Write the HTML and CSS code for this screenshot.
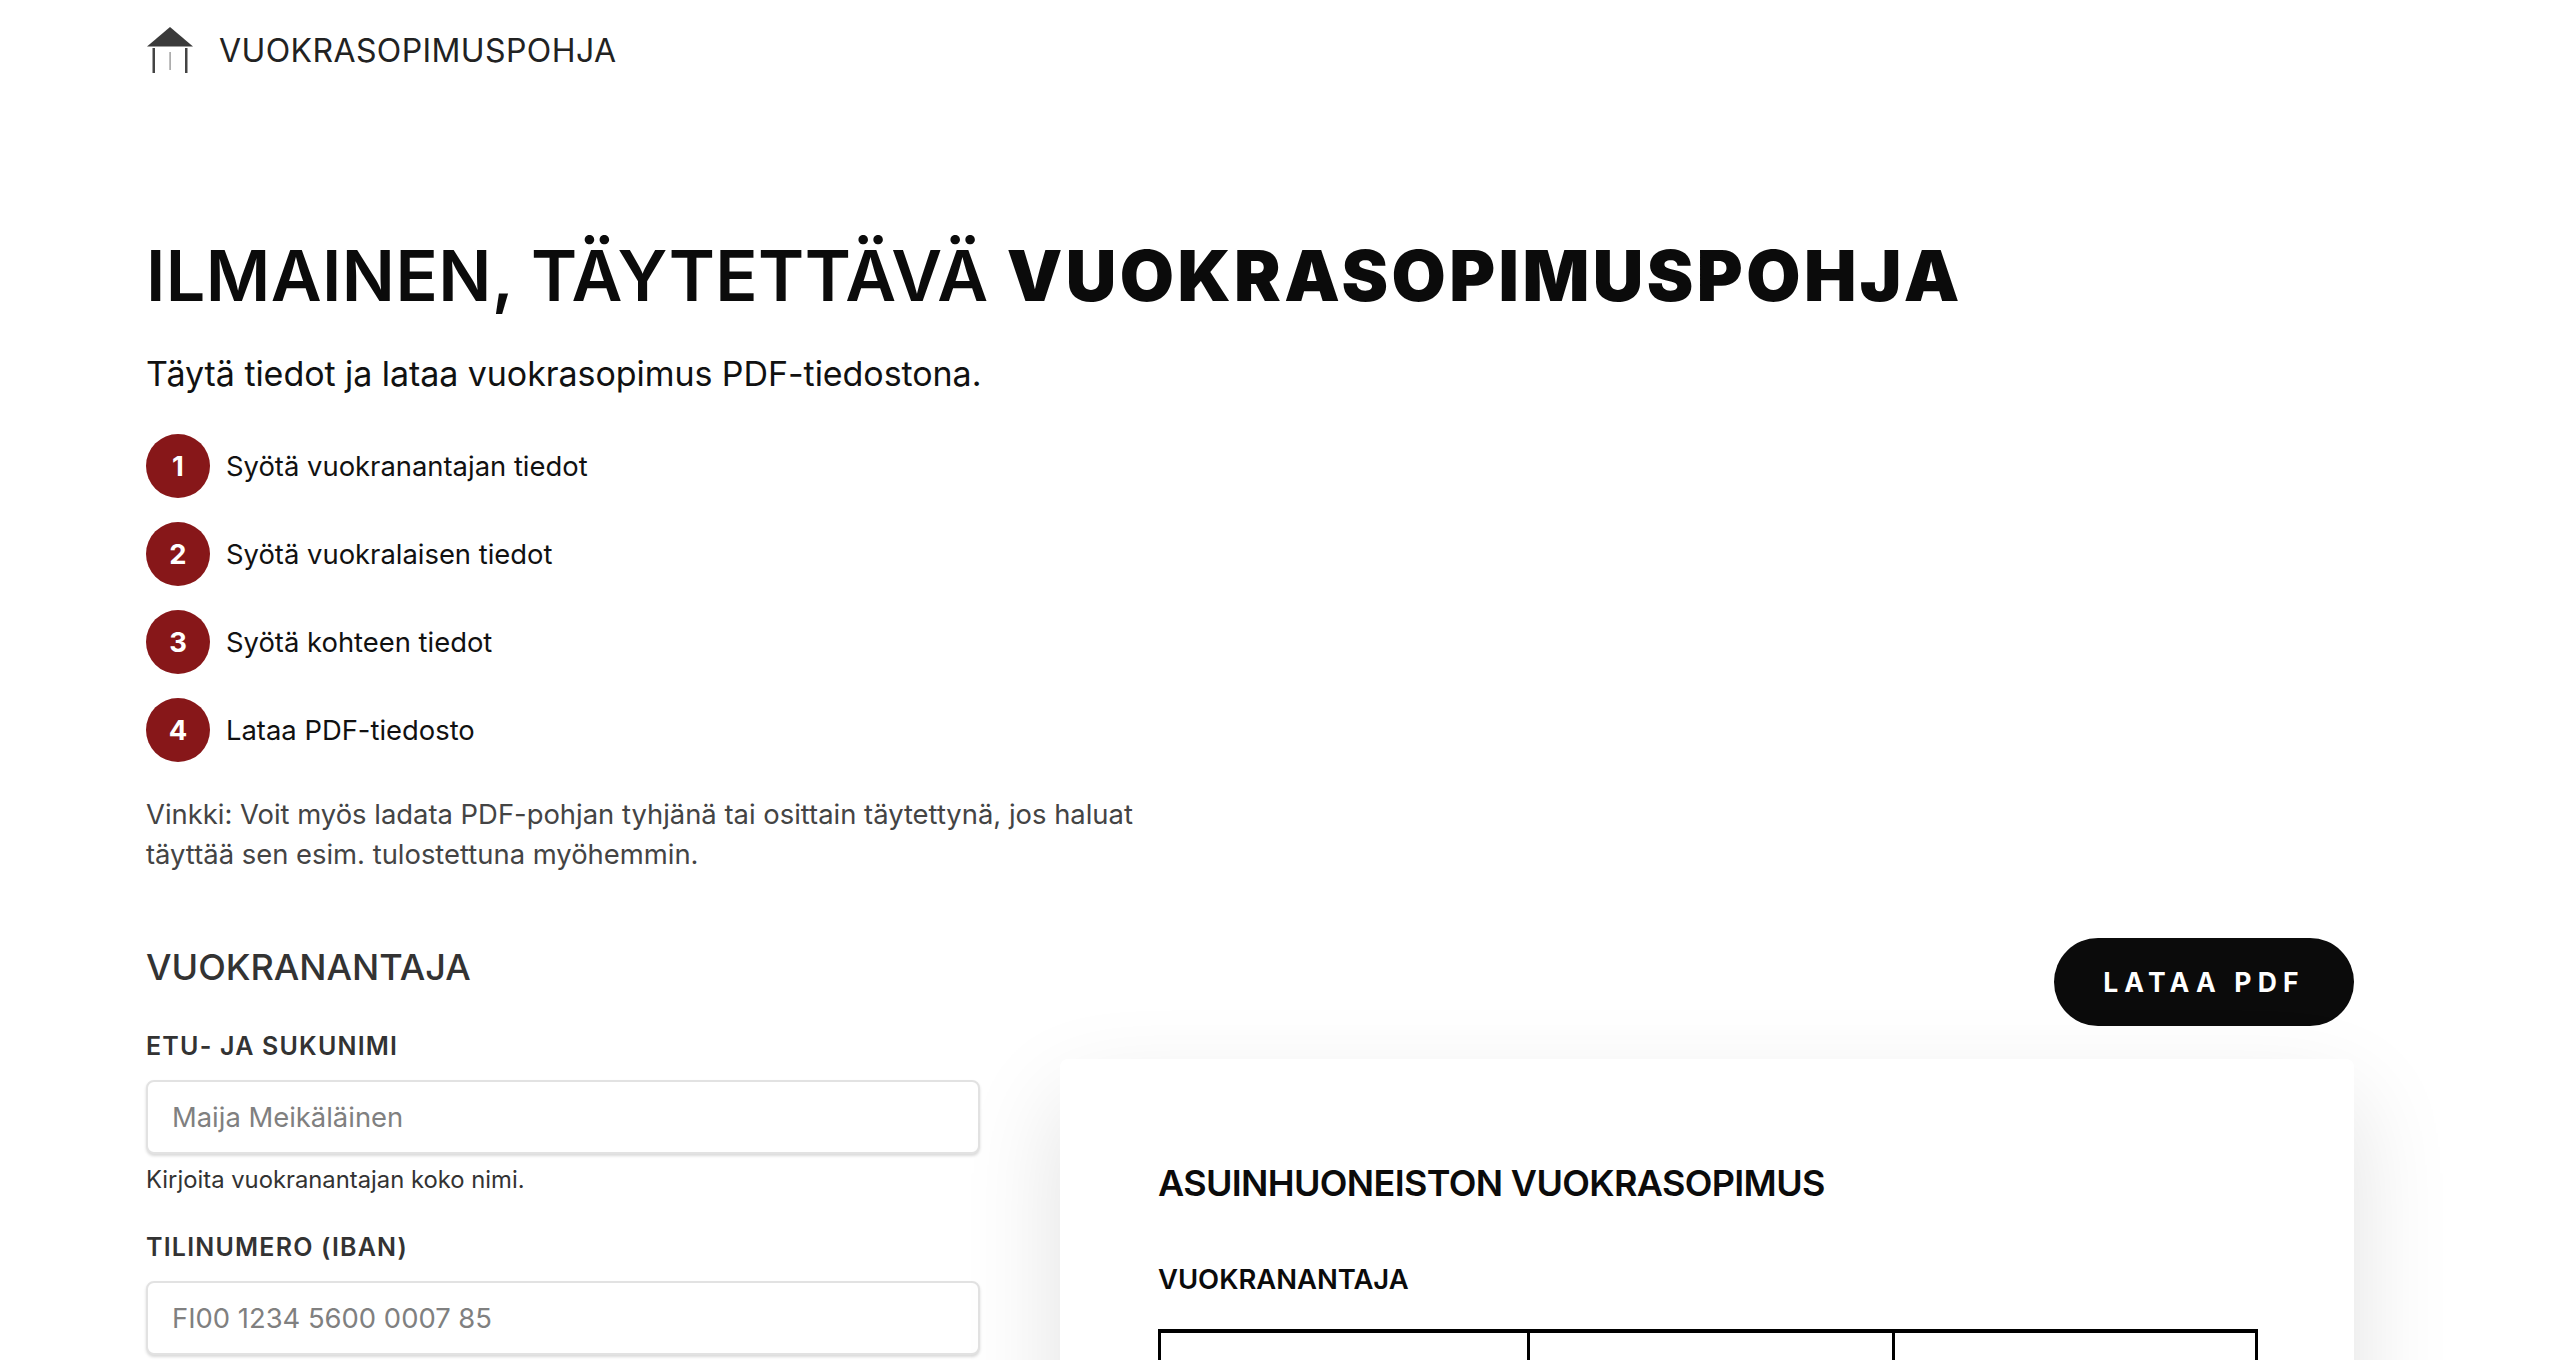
FILE: index.html
```html
<!DOCTYPE html>
<html lang="fi">
<head>
<meta charset="utf-8">
<title>Vuokrasopimuspohja</title>
<link rel="stylesheet" href="styles.css">
</head>
<body>
<div class="page">
  <header class="brand">
    <svg class="brand-icon" viewBox="0 0 46 46" aria-hidden="true">
      <polygon points="23,0 46,19.5 0,19.5" fill="#3a3a3a"/>
      <rect x="5.5" y="21" width="2.5" height="25" fill="#444"/>
      <rect x="22.4" y="25" width="1.4" height="18" fill="#999"/>
      <rect x="38" y="21" width="2.5" height="25" fill="#444"/>
    </svg>
    <span class="brand-name">VUOKRASOPIMUSPOHJA</span>
  </header>
  <section class="intro">
    <h1 class="title">ILMAINEN, TÄYTETTÄVÄ <strong>VUOKRASOPIMUSPOHJA</strong></h1>
    <p class="lead">Täytä tiedot ja lataa vuokrasopimus PDF-tiedostona.</p>
    <ol class="steps">
      <li class="step"><span class="step-num">1</span>Syötä vuokranantajan tiedot</li>
      <li class="step"><span class="step-num">2</span>Syötä vuokralaisen tiedot</li>
      <li class="step"><span class="step-num">3</span>Syötä kohteen tiedot</li>
      <li class="step"><span class="step-num">4</span>Lataa PDF-tiedosto</li>
    </ol>
    <p class="tip">Vinkki: Voit myös ladata PDF-pohjan tyhjänä tai osittain täytettynä, jos haluat täyttää sen esim. tulostettuna myöhemmin.</p>
  </section>
  <main class="workspace">
    <form class="form">
      <h2 class="form-heading">VUOKRANANTAJA</h2>
      <div class="field">
        <label class="field-label" for="name">ETU- JA SUKUNIMI</label>
        <input class="field-input" id="name" type="text" placeholder="Maija Meikäläinen">
        <p class="field-help">Kirjoita vuokranantajan koko nimi.</p>
      </div>
      <div class="field">
        <label class="field-label" for="iban">TILINUMERO (IBAN)</label>
        <input class="field-input" id="iban" type="text" placeholder="FI00 1234 5600 0007 85">
      </div>
    </form>
    <div class="preview-col">
      <button class="download" type="button">LATAA PDF</button>
      <article class="sheet">
        <h2 class="sheet-title">ASUINHUONEISTON VUOKRASOPIMUS</h2>
        <h3 class="sheet-sub">VUOKRANANTAJA</h3>
        <table class="sheet-table">
          <tr><td class="cell-wide"></td><td class="cell-mid"></td><td></td></tr>
        </table>
      </article>
    </div>
  </main>
</div>
</body>
</html>
```
FILE: styles.css
```css
* { box-sizing: border-box; }
html, body { margin: 0; height: 1360px; overflow: hidden; background: #fff; }
body { font-family: Inter, "Liberation Sans", sans-serif; color: #0b0b0b; }
.page { width: 2208px; margin-left: 146px; }

.brand { display: flex; align-items: center; gap: 26px; height: 100px; padding-left: 1px; }
.brand-icon { width: 46px; height: 46px; flex: none; }
.brand-name { font-size: 32px; letter-spacing: 0.4px; color: #222; }

.intro { padding-top: 131px; }
.title { margin: 0; font-size: 70px; line-height: 90px; font-weight: 600; letter-spacing: 0.4px; color: #0b0b0b; }
.title strong { font-weight: 900; letter-spacing: 3.45px; }
.lead { margin: 25px 0 0; font-size: 34px; line-height: 56px; letter-spacing: -0.06px; color: #111; }
.steps { list-style: none; margin: 32px 0 0; padding: 0; }
.step { display: flex; align-items: center; gap: 16px; height: 64px; margin-bottom: 24px; font-size: 27.4px; color: #111; }
.step-num { width: 64px; height: 64px; border-radius: 50%; background: #871719; color: #fff; font-weight: 700; display: flex; align-items: center; justify-content: center; }
.tip { margin: 32px 0 0; width: 1010px; font-size: 27.4px; line-height: 40px; color: #444; }

.workspace { display: grid; grid-template-columns: 834px 1294px; column-gap: 80px; margin-top: 48px; }
.form { padding-top: 21px; }
.form-heading { margin: 0; font-size: 36px; line-height: 48px; font-weight: 500; color: #333; }
.field { margin-top: 39px; }
.field + .field { margin-top: 35px; }
.field-label { display: block; font-size: 25px; line-height: 32px; font-weight: 600; letter-spacing: 1.2px; color: #333; }
.field-input { display: block; width: 100%; height: 74px; margin-top: 18px; padding: 0 24px; border: 2px solid #e2e2e2; border-radius: 8px; background: #fff; box-shadow: 0 2px 3px rgba(0,0,0,.15); font: 27.4px Inter, "Liberation Sans", sans-serif; }
.field-input::placeholder { color: #808080; opacity: 1; }
.field-help { margin: 10px 0 0; font-size: 23.8px; line-height: 32px; color: #333; }

.preview-col { display: flex; flex-direction: column; align-items: flex-end; padding-top: 16px; }
.download { width: 300px; height: 88px; border: 0; border-radius: 44px; background: #0b0b0b; color: #fff; font: 700 26.5px Inter, "Liberation Sans", sans-serif; letter-spacing: 6.2px; }
.sheet { align-self: stretch; height: 1200px; margin-top: 33px; padding: 100px 96px 98px 98px; background: #fff; border-radius: 8px; box-shadow: 0 40px 100px rgba(0,0,0,.12); }
.sheet-title { margin: 0; font-size: 36px; line-height: 48px; font-weight: 600; letter-spacing: -0.65px; color: #0b0b0b; }
.sheet-sub { margin: 54px 0 0; font-size: 27.4px; line-height: 36px; font-weight: 600; color: #0b0b0b; }
.sheet-table { width: 100%; height: 400px; margin-top: 32px; border-collapse: collapse; table-layout: fixed; border: 3px solid #000; border-top-width: 4px; }
.sheet-table td { border: 3px solid #000; border-top-width: 4px; }
.sheet-table .cell-wide { width: 33.6%; }
.sheet-table .cell-mid { width: 33.3%; }
```
